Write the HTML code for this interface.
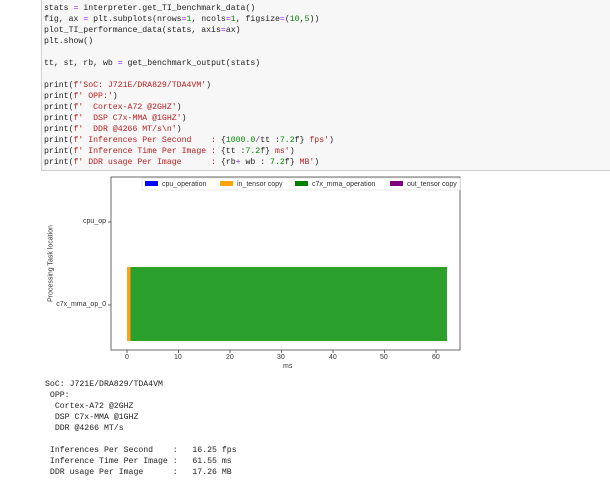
<!DOCTYPE html>
<html><head><style>
body{margin:0;width:610px;height:480px;background:#fff;position:relative;overflow:hidden;font-family:"Liberation Mono",monospace;}
.cell{position:absolute;left:41px;top:-2px;width:575px;height:171px;background:#f7f7f7;border:1px solid #cfcfcf;}
pre{margin:0;position:absolute;font-family:"Liberation Mono",monospace;font-size:8.2px;line-height:11px;color:#222;}
.s{color:#ba2121}.n{color:#080}.o{color:#a2f}
.t{position:absolute;font-family:"Liberation Sans",sans-serif;font-size:7px;color:#333;}
</style></head><body>
<div class="cell"></div>
<pre style="left:44px;top:3px">stats <span class="o">=</span> interpreter.get_TI_benchmark_data()
fig, ax <span class="o">=</span> plt.subplots(nrows<span class="o">=</span><span class="n">1</span>, ncols<span class="o">=</span><span class="n">1</span>, figsize<span class="o">=</span>(<span class="n">10</span>,<span class="n">5</span>))
plot_TI_performance_data(stats, axis<span class="o">=</span>ax)
plt.show()

tt, st, rb, wb <span class="o">=</span> get_benchmark_output(stats)

print(<span class="s">f'SoC: J721E/DRA829/TDA4VM'</span>)
print(<span class="s">f' OPP:'</span>)
print(<span class="s">f'  Cortex-A72 @2GHZ'</span>)
print(<span class="s">f'  DSP C7x-MMA @1GHZ'</span>)
print(<span class="s">f'  DDR @4266 MT/s\n'</span>)
print(<span class="s">f' Inferences Per Second    : </span>{<span class="n">1000.0</span><span class="o">/</span>tt :<span class="n">7.2</span>f}<span class="s"> fps'</span>)
print(<span class="s">f' Inference Time Per Image : </span>{tt :<span class="n">7.2</span>f}<span class="s"> ms'</span>)
print(<span class="s">f' DDR usage Per Image      : </span>{rb<span class="o">+</span> wb : <span class="n">7.2</span>f}<span class="s"> MB'</span>)</pre>

<svg style="position:absolute;left:0;top:0" width="610" height="480">
<rect x="111" y="177" width="349" height="173" fill="none" stroke="#444" stroke-width="0.8"/>
<rect x="130" y="267" width="317" height="74" fill="#2ca02c"/>
<rect x="127" y="267" width="3.5" height="74" fill="#ff9f1a"/>
<rect x="142" y="178" width="318" height="12" fill="#fff" stroke="#ddd" stroke-width="0.6"/>
<rect x="145" y="181" width="13" height="5" fill="#0000ff"/>
<rect x="220" y="181" width="13" height="5" fill="#ffa500"/>
<rect x="295" y="181" width="13" height="5" fill="#008000"/>
<rect x="390" y="181" width="13" height="5" fill="#800080"/>
<g stroke="#444" stroke-width="0.8">
<line x1="127" y1="350" x2="127" y2="353"/><line x1="178.5" y1="350" x2="178.5" y2="353"/><line x1="230" y1="350" x2="230" y2="353"/><line x1="281.5" y1="350" x2="281.5" y2="353"/><line x1="333" y1="350" x2="333" y2="353"/><line x1="384.5" y1="350" x2="384.5" y2="353"/><line x1="436" y1="350" x2="436" y2="353"/>
<line x1="108" y1="222" x2="111" y2="222"/><line x1="108" y1="305" x2="111" y2="305"/>
</g>
</svg>
<div class="t" style="left:162px;top:181px">cpu_operation</div>
<div class="t" style="left:237px;top:181px">in_tensor copy</div>
<div class="t" style="left:312px;top:181px">c7x_mma_operation</div>
<div class="t" style="left:407px;top:181px">out_tensor copy</div>
<div class="t" style="left:0;width:106px;text-align:right;top:218px">cpu_op</div>
<div class="t" style="left:0;width:106px;text-align:right;top:301px">c7x_mma_op_0</div>
<div class="t" style="left:125px;top:354px">0</div>
<div class="t" style="left:174px;top:354px">10</div>
<div class="t" style="left:226px;top:354px">20</div>
<div class="t" style="left:277px;top:354px">30</div>
<div class="t" style="left:329px;top:354px">40</div>
<div class="t" style="left:380px;top:354px">50</div>
<div class="t" style="left:432px;top:354px">60</div>
<div class="t" style="left:283px;top:363px">ms</div>
<div class="t" style="left:6px;top:260px;width:90px;text-align:center;transform:rotate(-90deg);transform-origin:center;">Processing Task location</div>

<pre style="left:45px;top:379px">SoC: J721E/DRA829/TDA4VM
 OPP:
  Cortex-A72 @2GHZ
  DSP C7x-MMA @1GHZ
  DDR @4266 MT/s

 Inferences Per Second    :   16.25 fps
 Inference Time Per Image :   61.55 ms
 DDR usage Per Image      :   17.26 MB</pre>
</body></html>
